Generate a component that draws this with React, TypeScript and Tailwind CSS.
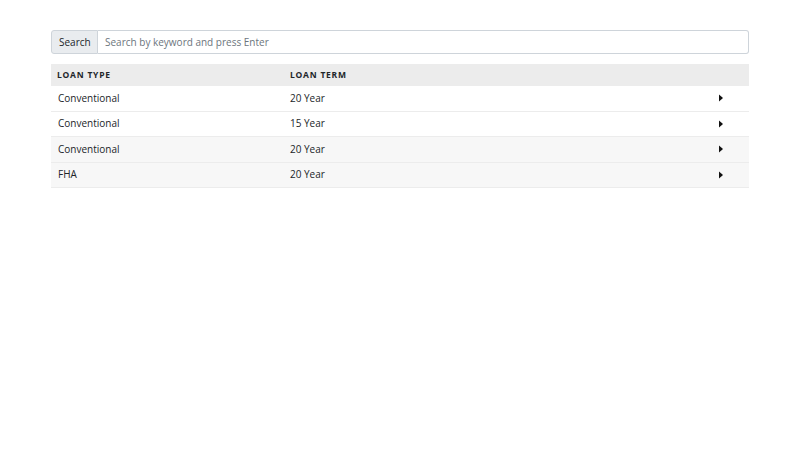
const rows = [
  { type: 'Conventional', term: '20 Year', bg: 'bg-white' },
  { type: 'Conventional', term: '15 Year', bg: 'bg-white' },
  { type: 'Conventional', term: '20 Year', bg: 'bg-[#f7f7f7]' },
  { type: 'FHA', term: '20 Year', bg: 'bg-[#f7f7f7]' },
]

export default function App() {
  return (
    <div className="min-h-[450px] bg-white px-[51px] pt-[30px] text-[#212529]" style={{ fontFamily: '"Open Sans", sans-serif' }}>
      <div className="flex h-[24px] w-[698px] text-[10px]">
        <span className="flex w-[47px] items-center rounded-l-[3px] border border-[#ced4da] bg-[#e9ecef] pl-[7px]">Search</span>
        <input
          className="flex-1 rounded-r-[3px] border border-l-0 border-[#ced4da] px-[7px] text-[10px] outline-none placeholder:text-[#6c757d]"
          placeholder="Search by keyword and press Enter"
        />
      </div>

      <div className="mt-[10px] w-[698px]">
        <div className="flex h-[22px] items-center bg-[#ececec] text-[8.5px] font-bold uppercase tracking-[0.09em] text-[#212529]">
          <div className="w-[232px] pl-[6px]">Loan Type</div>
          <div className="flex-1 pl-[7px]">Loan Term</div>
        </div>
        {rows.map((r, i) => (
          <div key={i} className={`flex h-[25.5px] items-center border-b border-[#ececec] text-[10px] ${r.bg}`}>
            <div className="w-[232px] pl-[7px]">{r.type}</div>
            <div className="flex-1 pl-[7px]">{r.term}</div>
            <div className="w-[31px]">
              <svg width="6" height="8" viewBox="0 0 6 8">
                <path d="M1 0.5 L5 4 L1 7.5 Z" fill="#111" />
              </svg>
            </div>
          </div>
        ))}
      </div>
    </div>
  )
}
